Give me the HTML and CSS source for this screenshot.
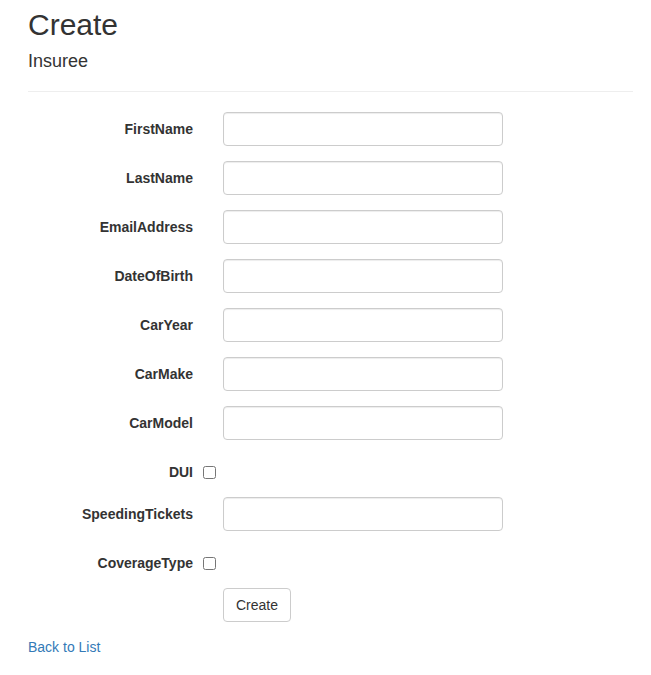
FILE: index.html
```html
<!DOCTYPE html>
<html>
<head>
<meta charset="utf-8">
<title>Create</title>
<link rel="stylesheet" href="styles.css">
</head>
<body>
<div class="container">
  <h2 class="page-title">Create</h2>
  <form class="form-horizontal">
    <h4 class="subtitle">Insuree</h4>
    <hr class="divider">
    <div class="form-group">
      <label class="control-label">FirstName</label>
      <div class="field"><input class="form-control" type="text"></div>
    </div>
    <div class="form-group">
      <label class="control-label">LastName</label>
      <div class="field"><input class="form-control" type="text"></div>
    </div>
    <div class="form-group">
      <label class="control-label">EmailAddress</label>
      <div class="field"><input class="form-control" type="text"></div>
    </div>
    <div class="form-group">
      <label class="control-label">DateOfBirth</label>
      <div class="field"><input class="form-control" type="text"></div>
    </div>
    <div class="form-group">
      <label class="control-label">CarYear</label>
      <div class="field"><input class="form-control" type="text"></div>
    </div>
    <div class="form-group">
      <label class="control-label">CarMake</label>
      <div class="field"><input class="form-control" type="text"></div>
    </div>
    <div class="form-group">
      <label class="control-label">CarModel</label>
      <div class="field"><input class="form-control" type="text"></div>
    </div>
    <div class="form-group">
      <label class="control-label">DUI</label>
      <div class="field"><div class="checkbox"><input type="checkbox"></div></div>
    </div>
    <div class="form-group">
      <label class="control-label">SpeedingTickets</label>
      <div class="field"><input class="form-control" type="text"></div>
    </div>
    <div class="form-group">
      <label class="control-label">CoverageType</label>
      <div class="field"><div class="checkbox"><input type="checkbox"></div></div>
    </div>
    <div class="form-group">
      <div class="label-spacer"></div>
      <div class="field"><button class="btn" type="button">Create</button></div>
    </div>
  </form>
  <div class="back">
    <a href="#" class="back-link">Back to List</a>
  </div>
</div>
</body>
</html>
```

FILE: styles.css
```css
html, body {
  margin: 0;
  padding: 0;
  background: #fff;
}
body {
  font-family: "Liberation Sans", Arial, Helvetica, sans-serif;
  font-size: 14px;
  line-height: 20px;
  color: #333;
}
.container {
  padding: 8px 18px 0 28px;
}
.page-title {
  margin: 0;
  font-size: 30px;
  font-weight: 500;
  line-height: 33px;
}
.form-horizontal {
  margin: 0;
}
.subtitle {
  margin: 10px 0 0 0;
  font-size: 18px;
  font-weight: 500;
  line-height: 20px;
}
.divider {
  margin: 20px 0;
  border: 0;
  border-top: 1px solid #eee;
  height: 0;
}
.form-group {
  display: flex;
  margin-bottom: 15px;
}
.control-label, .label-spacer {
  box-sizing: border-box;
  width: 180px;
  flex: 0 0 180px;
  padding: 7px 15px 0 0;
  text-align: right;
  font-weight: bold;
  line-height: 20px;
}
.field {
  padding-left: 15px;
}
.form-control {
  display: block;
  box-sizing: border-box;
  width: 280px;
  height: 34px;
  margin: 0;
  padding: 6px 12px;
  font-family: inherit;
  font-size: 14px;
  color: #555;
  background: #fff;
  border: 1px solid #ccc;
  border-radius: 4px;
  box-shadow: inset 0 1px 1px rgba(0,0,0,.075);
}
.checkbox {
  padding-top: 7px;
  height: 20px;
}
.checkbox input {
  display: block;
  width: 13px;
  height: 13px;
  margin: 4px 0 0 -20px;
}
.btn {
  display: block;
  box-sizing: border-box;
  height: 34px;
  padding: 6px 12px;
  font-family: inherit;
  font-size: 14px;
  line-height: 20px;
  color: #333;
  background: #fff;
  border: 1px solid #ccc;
  border-radius: 4px;
}
.back-link {
  color: #337ab7;
  text-decoration: none;
}
```
